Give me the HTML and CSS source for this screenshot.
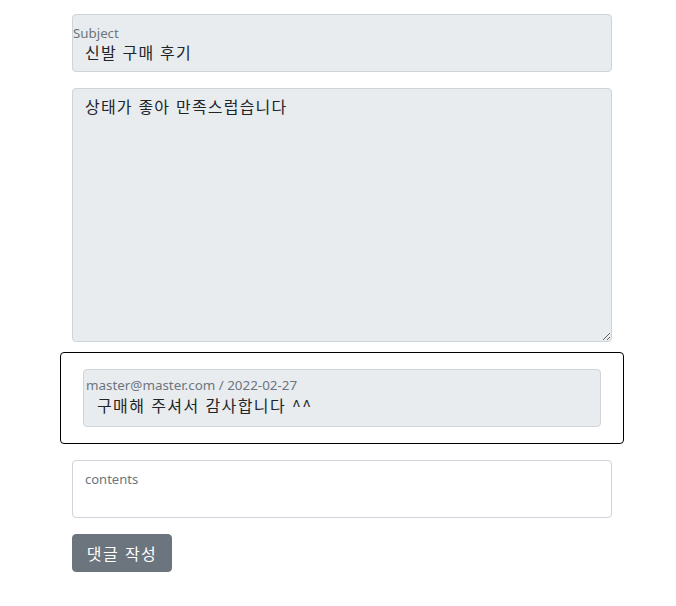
FILE: index.html
```html
<!DOCTYPE html>
<html lang="ko">
<head>
<meta charset="utf-8">
<link rel="stylesheet" href="styles.css">
</head>
<body>
<div class="page">
  <div class="field field-subject">
    <div class="label">Subject</div>
    <div class="value">신발 구매 후기</div>
  </div>
  <textarea class="field field-body" disabled>상태가 좋아 만족스럽습니다</textarea>
  <div class="comment-card">
    <div class="comment">
      <div class="meta">master@master.com / 2022-02-27</div>
      <div class="comment-text">구매해 주셔서 감사합니다 ^^</div>
    </div>
  </div>
  <div class="field field-input">
    <div class="placeholder">contents</div>
  </div>
  <button class="btn" type="button">댓글 작성</button>
</div>
</body>
</html>
```

FILE: styles.css
```css
* { box-sizing: border-box; }
html, body { margin: 0; padding: 0; background: #fff; }
body {
  font-family: "Noto Sans", "Noto Sans CJK KR", sans-serif;
  color: #212529;
}
.page {
  width: 564px;
  margin-left: 60px;
  padding-top: 14px;
  display: flex;
  flex-direction: column;
}
.field {
  margin: 0 12px;
  border: 1px solid #ced4da;
  border-radius: 4px;
  background: #e9ecef;
}
.field-subject {
  height: 58px;
  display: flex;
  flex-direction: column;
}
.label {
  font-size: 13.3px;
  line-height: 18px;
  color: #6c757d;
  margin-top: 9px;
}
.value {
  font-family: "Noto Sans CJK KR", sans-serif;
  font-size: 16px;
  line-height: 22px;
  letter-spacing: 1.2px;
  padding-left: 12px;
  margin-top: -1px;
}
.field-body {
  margin-top: 16px;
  height: 254px;
  width: 540px;
  padding: 5px 12px;
  font-family: "Noto Sans CJK KR", sans-serif;
  font-size: 16px;
  line-height: 24px;
  letter-spacing: 1.2px;
  color: #212529;
  resize: vertical;
  display: block;
  opacity: 1;
  -webkit-text-fill-color: #212529;
}
.comment-card {
  margin-top: 10px;
  border: 1px solid #000;
  border-radius: 4px;
  padding: 16px 22px;
}
.comment {
  height: 58px;
  border: 1px solid #ced4da;
  border-radius: 4px;
  background: #e9ecef;
  padding: 6px 0 0 2px;
}
.meta {
  font-size: 13.4px;
  line-height: 18px;
  color: #6c757d;
}
.comment-text {
  font-family: "Noto Sans CJK KR", sans-serif;
  font-size: 16px;
  line-height: 22px;
  letter-spacing: 1.4px;
  padding-left: 11px;
}
.field-input {
  margin-top: 16px;
  height: 58px;
  background: #fff;
  padding: 9px 12px 0;
}
.placeholder {
  font-size: 13px;
  line-height: 18px;
  color: #6c757d;
}
.btn {
  margin: 16px 12px 0;
  align-self: flex-start;
  width: 100px;
  height: 38px;
  border: 1px solid #6c757d;
  border-radius: 4px;
  background: #6c757d;
  color: #fff;
  font-family: "Noto Sans CJK KR", sans-serif;
  font-size: 16px;
  line-height: 24px;
  letter-spacing: 1.4px;
  padding: 0;
}
```
